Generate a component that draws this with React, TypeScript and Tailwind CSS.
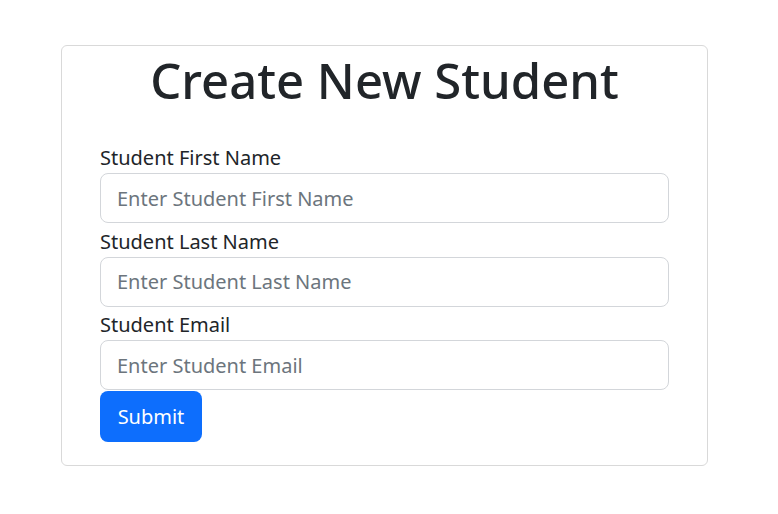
const fields = [
  { label: "Student First Name", placeholder: "Enter Student First Name", type: "text" },
  { label: "Student Last Name", placeholder: "Enter Student Last Name", type: "text" },
  { label: "Student Email", placeholder: "Enter Student Email", type: "email" },
];

export default function App() {
  return (
    <div className="min-h-[514px] w-full bg-white pl-[61px] pt-[45px] font-['Noto_Sans',sans-serif] text-[#212529]">
      <div className="w-[647px] rounded-[6px] border border-[#d9d9d9] px-[38px] pb-[23px]">
        <h1 className="mt-[1px] text-center text-[49px] leading-[66px] font-medium">
          Create New Student
        </h1>
        <form className="mt-[30px] flex flex-col" onSubmit={(e) => e.preventDefault()}>
          {fields.map((field, i) => (
            <div key={field.label} className={i === 0 ? "" : "mt-[3.5px]"}>
              <label className="block text-[20px] leading-[30px]">{field.label}</label>
              <input
                type={field.type}
                placeholder={field.placeholder}
                className="block h-[50px] w-full rounded-[8px] border border-[#d3d6da] px-[16px] text-[20px] text-[#212529] outline-none placeholder:text-[#6c757d]"
              />
            </div>
          ))}
          <button
            type="submit"
            className="mt-[1px] h-[51px] w-[102px] rounded-[8px] bg-[#0d6efd] text-[20px] text-white"
          >
            Submit
          </button>
        </form>
      </div>
    </div>
  );
}
